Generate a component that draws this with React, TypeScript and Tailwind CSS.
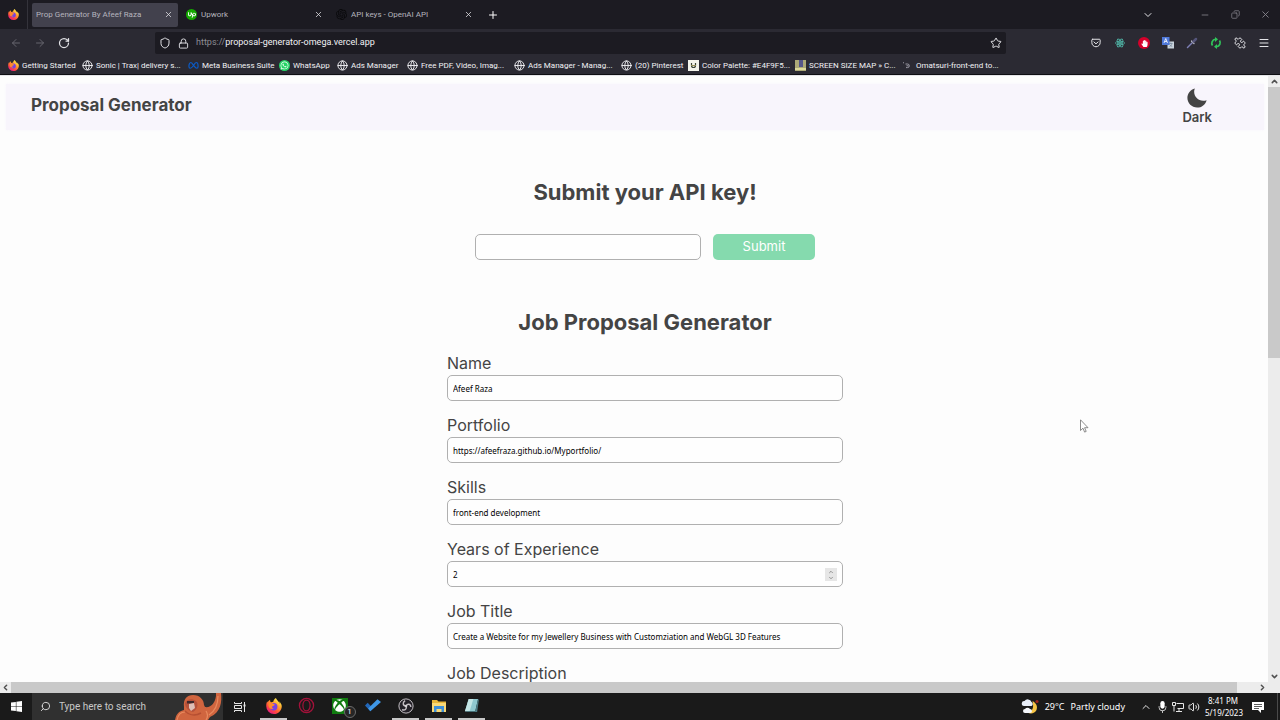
import { useState } from "react";
import type { ReactNode } from "react";
import {
  ArrowLeft,
  ArrowRight,
  ChevronDown,
  ChevronLeft,
  ChevronRight,
  ChevronUp,
  Copy,
  Globe,
  Lock,
  Menu,
  Minus,
  Plus,
  Puzzle,
  RotateCw,
  Search,
  Shield,
  Star,
  Volume2,
  X,
} from "lucide-react";
import { FaHandPaper, FaWhatsapp, FaXbox } from "react-icons/fa";
import { IoMdMoon } from "react-icons/io";
import { SiOpenai, SiUpwork } from "react-icons/si";

const FirefoxIcon = ({ className }: { className: string }) => (
  <svg viewBox="0 0 32 32" className={className} aria-hidden="true">
    <defs>
      <linearGradient id="ff-flame" x1="0.8" y1="0.1" x2="0.2" y2="0.95">
        <stop offset="0" stopColor="#fff14f" />
        <stop offset="0.35" stopColor="#ff9d2a" />
        <stop offset="0.7" stopColor="#ff4a3d" />
        <stop offset="1" stopColor="#e5168b" />
      </linearGradient>
    </defs>
    <path
      d="M29.6 11.2c-.7-1.700-2.100-3.500-3.200-4.100.9 1.800 1.400 3.500 1.600 4.800C26.200 7.500 23.200 5.700 20.800 1.900L19.800 0c-3.300 2-4.800 5.300-5.200 7.600-1.600.1-3 .6-4.300 1.300C8.500 8.200 8 5.500 8.200 3.700 5.900 5 4.100 7.100 3 9.200c-.4-.6-.4-2 0-3C.8 9.500.4 13 .5 16.500A15.500 15.500 0 0 0 16 32c8.700 0 15.500-7 15.500-15.600 0-1.900-.6-3.700-1.900-5.200z"
      fill="url(#ff-flame)"
    />
    <circle cx="15.500" cy="17.500" r="7.300" fill="#7542e5" />
    <path d="M5 11c3-3 7-2 9 .5 2 .4 3.500 1 3.500 2-.5 2-4 2-5 3.500-1 2 .5 4 3 4.500-5 2-10-1-10.500-6z" fill="#ff8a2b" />
  </svg>
);

const MetaIcon = ({ className }: { className: string }) => (
  <svg viewBox="0 0 24 18" className={className} fill="none" stroke="#0a5bc8" strokeWidth="2.600" aria-hidden="true">
    <path d="M12 9C9.500 4.500 8.300 2.500 6.200 2.500 3.700 2.500 2 6.500 2 10.800c0 2.700 1 4.200 2.800 4.200C7.500 15 9.500 12.500 12 9c2.300-4 3.700-6.500 6-6.500 2.400 0 4 4 4 8.300 0 2.700-1 4.200-2.700 4.200-2.600 0-4-2-7.300-6z" />
  </svg>
);

const PocketIcon = ({ className }: { className: string }) => (
  <svg viewBox="0 0 24 24" className={className} fill="none" stroke="currentColor" strokeWidth="2.400" strokeLinecap="round" strokeLinejoin="round" aria-hidden="true">
    <path d="M4 3h16a2 2 0 0 1 2 2v6a10 10 0 0 1-20 0V5a2 2 0 0 1 2-2z" />
    <path d="m7 9.500 5 4.500 5-4.500" />
  </svg>
);

const ReactIcon = ({ className }: { className: string }) => (
  <svg viewBox="0 0 24 24" className={className} fill="none" stroke="#4fb3a5" strokeWidth="2" aria-hidden="true">
    <ellipse cx="12" cy="12" rx="11" ry="4.500" />
    <ellipse cx="12" cy="12" rx="11" ry="4.500" transform="rotate(60 12 12)" />
    <ellipse cx="12" cy="12" rx="11" ry="4.500" transform="rotate(120 12 12)" />
    <circle cx="12" cy="12" r="2" fill="#4fb3a5" />
  </svg>
);

const TranslateIcon = ({ className }: { className: string }) => (
  <svg viewBox="0 0 24 24" className={className} aria-hidden="true">
    <rect x="11" y="9" width="13" height="14" fill="#c9d3dc" />
    <path d="M14 13h7M17.500 11v2M20 13c-1 4-3 5-5 6M15.500 15c1 2 3 3 5 4" stroke="#6c7f92" strokeWidth="1.300" fill="none" />
    <rect x="0" y="0" width="15" height="16" fill="#4f78d8" />
    <path d="m4 12 3.500-9L11 12M5.300 9h4.400" stroke="#fff" strokeWidth="1.600" fill="none" />
  </svg>
);

const DropperIcon = ({ className }: { className: string }) => (
  <svg viewBox="0 0 24 24" className={className} fill="none" strokeLinecap="round" aria-hidden="true">
    <path d="m3 21 10-10" stroke="#7d7fb5" strokeWidth="3" />
    <path d="m11 8 5 5" stroke="#b9b9c6" strokeWidth="2.400" />
    <path d="m15 9 5-5" stroke="#55557a" strokeWidth="5" />
  </svg>
);

const SyncIcon = ({ className }: { className: string }) => (
  <svg viewBox="0 0 24 24" className={className} fill="none" stroke="#30c45a" strokeWidth="3.500" aria-hidden="true">
    <path d="M5 17a8 8 0 0 1 6-12.500M19 7a8 8 0 0 1-6 12.500" />
    <path d="M10 0v10l6-5.500zM14 24V14l-6 5.500z" fill="#30c45a" stroke="none" />
  </svg>
);

const PaletteIcon = ({ className }: { className: string }) => (
  <svg viewBox="0 0 11 11" className={className} aria-hidden="true">
    <rect width="11" height="11" fill="#f4f4ec" />
    <path d="M3.500 3v2.500a2 2 0 0 0 4 0V3" fill="none" stroke="#3b4436" strokeWidth="1.200" />
    <path d="M3 5.500h5" stroke="#97915a" />
  </svg>
);

const ScreenMapIcon = ({ className }: { className: string }) => (
  <svg viewBox="0 0 11 11" className={className} aria-hidden="true">
    <rect width="11" height="11" fill="#aca978" />
    <rect x="4" width="4" height="7" fill="#55578a" />
    <rect y="8" width="11" height="2" fill="#dcd99a" />
  </svg>
);

const OmatsuriIcon = ({ className }: { className: string }) => (
  <svg viewBox="0 0 11 11" className={className} fill="none" stroke="#9c9aa5" aria-hidden="true">
    <path d="M3.500 4h2a1.800 1.800 0 0 1 0 3.600H4M4.500 5.800h2M1 2.500l1 .5" />
  </svg>
);

const WindowsIcon = ({ className }: { className: string }) => (
  <svg viewBox="0 0 12 12" className={className} fill="#fff" aria-hidden="true">
    <path d="M0 1.700 5.300 1v4.700H0zM5.900.9 12 0v5.700H5.900zM0 6.300h5.300V11L0 10.300zM5.900 6.300H12V12l-6.100-.9z" />
  </svg>
);

const OrangutanArt = () => (
  <svg viewBox="0 0 50 27" className="h-[27px] w-[50px] shrink-0" aria-hidden="true">
    <path d="M2 27c1-6 4-9 9-10l0-3C10 6 14 2 20 2c7 0 11 5 11 10l1 2c6 1 10-4 11-11V0h5c1 9 0 19-11 24l-2 3z" fill="#d0653f" />
    <path d="M4 27c1-5 4-8 8-8M36 22c6-4 9-10 9-19M33 27c2-3 2-6 0-9" fill="none" stroke="#e98a5e" strokeWidth="1.200" />
    <path d="M12 10c2-4 7-5 11-2 3 3 1 9-3 11-4-1-8-4-8-9z" fill="#b5513a" />
    <path d="M14 8h7v2.500h-7z" fill="#3f292b" />
    <path d="m16 11 5-1 1 5-4 3-2-3z" fill="#dfc0b8" />
    <path d="M12 18c3 3 9 6 16 2" fill="none" stroke="#b64f32" strokeWidth="1.500" />
  </svg>
);

const TaskViewIcon = () => (
  <svg viewBox="0 0 12 12" className="size-3" fill="none" stroke="#e6e6e6" aria-hidden="true">
    <path d="M.5 1v1.500h7V1M.5 11V9.500h7V11M.5 4.500h7v3h-7zM10.500 1v10" />
    <path d="M9.500 3.500h2v2h-2z" fill="#e6e6e6" stroke="none" />
  </svg>
);

const OperaIcon = () => (
  <svg viewBox="0 0 18 18" className="size-[17px]" fill="none" stroke="#a3123a" aria-hidden="true">
    <circle cx="9" cy="9" r="7.500" strokeWidth="1.400" />
    <ellipse cx="9" cy="9" rx="3.800" ry="5.800" strokeWidth="1.300" />
  </svg>
);

const XboxIcon = () => (
  <span className="relative grid size-4 place-items-center bg-[#107c10]">
    <FaXbox className="size-[13px] text-white" />
    <span className="absolute -right-2 -bottom-1 grid size-3 place-items-center rounded-full border border-[#6c6c6c] bg-[#262626] text-[8px] leading-none text-white">
      1
    </span>
  </span>
);

const TodoIcon = () => (
  <svg viewBox="0 0 18 16" className="h-[15px] w-4" aria-hidden="true">
    <path d="m0 8 3-3 6 6-3 3.500z" fill="#2367b8" />
    <path d="m6 14.500-2.500-3L14 1l4 3z" fill="#3f97e6" />
  </svg>
);

const ObsIcon = () => (
  <svg viewBox="0 0 18 18" className="size-4" fill="none" aria-hidden="true">
    <circle cx="9" cy="9" r="8" fill="#232027" stroke="#d6d2d6" />
    <path d="M9 9C5 8.500 5 5 8 3M9 9c2-3.500 5.500-2 5.500 1M9 9c1.500 3.500-1.500 5.500-4.500 4" stroke="#c4bfc4" strokeWidth="1.600" />
    <circle cx="9" cy="9" r="1.500" fill="#d6d2d6" />
  </svg>
);

const FolderIcon = () => (
  <svg viewBox="0 0 16 14" className="h-[14px] w-4" aria-hidden="true">
    <path d="M1 1h5l1.500 1.500H15V13H1z" fill="#e8b63a" />
    <path d="M1 4h14v9H1z" fill="#f8d877" />
    <path d="M3 7h10v6h-2.500v-3h-5v3H3z" fill="#3d8fd8" />
  </svg>
);

const NotepadIcon = () => (
  <svg viewBox="0 0 16 16" className="size-[15px]" aria-hidden="true">
    <path d="M5 1h10l-3 13H1z" fill="#8fc8cf" />
    <path d="m5 1 5 0-4 13H1z" fill="#c4e6e6" />
    <path d="m12 14 3-13 .8 1L14 15H3l-1-1z" fill="#4c7d86" />
  </svg>
);

const WeatherIcon = () => (
  <svg viewBox="0 0 18 16" className="h-4 w-[18px]" aria-hidden="true">
    <path d="M11.500 2c3.500 2 5.500 5 4 9-1.500 3.500-6 4.500-9 2.500 4 0 7-4 5-11.500z" fill="#f6c343" />
    <path d="M3 7a2.500 2.500 0 0 1 .5-5 4 4 0 0 1 7 1 2.200 2.200 0 0 1 0 4z" fill="#e8eef8" />
    <path d="M4 14a2 2 0 0 1 0-4 3 3 0 0 1 5 0 2 2 0 0 1 0 4z" fill="#f5f7fb" />
    <circle cx="16" cy="2.500" r="1.600" fill="#9e231c" />
  </svg>
);

const MicIcon = () => (
  <svg viewBox="0 0 10 14" className="h-3 w-[9px]" aria-hidden="true">
    <rect x="2.500" y="0" width="5" height="9" rx="2.500" fill="#fff" />
    <path d="M1 6v1.500a4 4 0 0 0 8 0V6M5 11v3" fill="none" stroke="#ddd" />
  </svg>
);

const NetworkIcon = () => (
  <svg viewBox="0 0 12 12" className="size-3" fill="none" stroke="#e6e6e6" aria-hidden="true">
    <path d="M4.500 2.500h7v5h-6M7 7.500v3M4 10.500h6" />
    <path d="M.5 1.500h3v3h-3zM2 4.500v6" />
  </svg>
);

const NotificationIcon = () => (
  <svg viewBox="0 0 12 12" className="size-3" aria-hidden="true">
    <path d="M0 1h12v8H9v3L6 9H0z" fill="#fff" />
    <path d="M2 3.500h8M2 5.500h8M2 7.500h5" stroke="#333" strokeWidth=".8" />
  </svg>
);

const tabs = [
  { title: "Prop Generator By Afeef Raza", icon: null, active: true },
  {
    title: "Upwork",
    icon: (
      <span className="grid size-[11px] shrink-0 place-items-center rounded-full bg-[#14a800]">
        <SiUpwork className="size-2 text-white" />
      </span>
    ),
    active: false,
  },
  { title: "API keys - OpenAI API", icon: <SiOpenai className="size-[11px] shrink-0 text-[#08080a]" />, active: false },
];

const globe = <Globe className="size-[11px] shrink-0" strokeWidth={2} />;

const bookmarks: { label: string; icon: ReactNode; width: string }[] = [
  { label: "Getting Started", icon: <FirefoxIcon className="size-[11px] shrink-0" />, width: "w-[74px]" },
  { label: "Sonic | Trax| delivery s...", icon: globe, width: "w-[106px]" },
  { label: "Meta Business Suite", icon: <MetaIcon className="h-[9px] w-[11px] shrink-0" />, width: "w-[91px]" },
  {
    label: "WhatsApp",
    icon: (
      <span className="grid size-[11px] shrink-0 place-items-center rounded-full bg-[#25d366]">
        <FaWhatsapp className="size-[9px] text-white" />
      </span>
    ),
    width: "w-[58px]",
  },
  { label: "Ads Manager", icon: globe, width: "w-[70px]" },
  { label: "Free PDF, Video, Imag...", icon: globe, width: "w-[107px]" },
  { label: "Ads Manager - Manag...", icon: globe, width: "w-[107px]" },
  { label: "(20) Pinterest", icon: globe, width: "w-[67px]" },
  { label: "Color Palette: #E4F9F5...", icon: <PaletteIcon className="size-[11px] shrink-0" />, width: "w-[107px]" },
  { label: "SCREEN SIZE MAP » C...", icon: <ScreenMapIcon className="size-[11px] shrink-0" />, width: "w-[107px]" },
  { label: "Omatsuri-front-end to...", icon: <OmatsuriIcon className="size-[11px] shrink-0" />, width: "w-[107px]" },
];

const taskbarApps: { name: string; icon: ReactNode; open: boolean }[] = [
  { name: "Firefox", icon: <FirefoxIcon className="size-4" />, open: true },
  { name: "Opera", icon: <OperaIcon />, open: false },
  { name: "Xbox", icon: <XboxIcon />, open: false },
  { name: "To Do", icon: <TodoIcon />, open: false },
  { name: "OBS", icon: <ObsIcon />, open: true },
  { name: "File Explorer", icon: <FolderIcon />, open: true },
  { name: "Notepad", icon: <NotepadIcon />, open: true },
];

const fields = [
  { id: "name", label: "Name", type: "text", value: "Afeef Raza" },
  { id: "portfolio", label: "Portfolio", type: "text", value: "https://afeefraza.github.io/Myportfolio/" },
  { id: "skills", label: "Skills", type: "text", value: "front-end development" },
  { id: "experience", label: "Years of Experience", type: "number", value: "2" },
  { id: "title", label: "Job Title", type: "text", value: "Create a Website for my Jewellery Business with Customziation and WebGL 3D Features" },
];

function TabStrip() {
  return (
    <div className="flex h-[29px] shrink-0 items-center bg-[#1c1b22] text-[8px] text-[#b5b4bd]">
      <div className="flex h-full w-7 items-center justify-center border-r border-[#34333b]">
        <FirefoxIcon className="size-[11px]" />
      </div>
      <div className="flex flex-1 items-center gap-1 pl-1">
        {tabs.map((tab) => (
          <div
            key={tab.title}
            className={`flex h-6 w-[146px] items-center gap-1 rounded-xs px-1 ${tab.active ? "bg-[#42414d]" : ""}`}
          >
            {tab.icon}
            <span className="flex-1 truncate">{tab.title}</span>
            <button aria-label={`Close ${tab.title}`} className="grid size-3 place-items-center text-[#e4e4e8]">
              <X className="size-[9px]" />
            </button>
          </div>
        ))}
        <button aria-label="New tab" className="ml-[3px] grid size-4 place-items-center text-white">
          <Plus className="size-3" />
        </button>
      </div>
      <button aria-label="List all tabs" className="mr-[45px] grid size-3 place-items-center text-[#e4e4e8]">
        <ChevronDown className="size-3" />
      </button>
      <div className="flex items-center gap-[18px] pr-[9px] text-[#85848c]">
        <button aria-label="Minimize" className="grid size-3 place-items-center">
          <Minus className="size-[10px]" />
        </button>
        <button aria-label="Restore" className="grid size-3 place-items-center">
          <Copy className="size-[9px] -scale-x-100" />
        </button>
        <button aria-label="Close window" className="grid size-3 place-items-center">
          <X className="size-[11px]" />
        </button>
      </div>
    </div>
  );
}

function NavigationBar() {
  return (
    <div className="flex h-7 shrink-0 items-center bg-[#2b2a33] text-[#e4e4e8]">
      <div className="flex w-[155px] items-center gap-3 pl-[10px]">
        <button aria-label="Back" className="text-[#66656e]">
          <ArrowLeft className="size-3" />
        </button>
        <button aria-label="Forward" className="text-[#66656e]">
          <ArrowRight className="size-3" />
        </button>
        <button aria-label="Reload">
          <RotateCw className="size-3" strokeWidth={2.5} />
        </button>
      </div>
      <div className="flex h-[22px] w-[851px] items-center gap-[7px] rounded-xs bg-[#1c1b22] px-1">
        <Shield className="size-3 shrink-0" />
        <Lock className="size-[11px] shrink-0" />
        <div className="flex-1 text-[9px] text-[#8d8c94]">
          https://<span className="text-[#f2f2f5]">proposal-generator-omega.vercel.app</span>
        </div>
        <button aria-label="Bookmark this page">
          <Star className="size-3" />
        </button>
      </div>
      <div className="ml-auto flex items-center gap-3 pr-[10px]">
        <button aria-label="Pocket"><PocketIcon className="size-3 p-px" /></button>
        <button aria-label="React Developer Tools"><ReactIcon className="size-3 p-px" /></button>
        <button aria-label="Ad blocker">
          <span className="grid size-3 place-items-center rounded-full bg-[#d4002a]">
            <FaHandPaper className="size-[7px] text-white" />
          </span>
        </button>
        <button aria-label="Translate"><TranslateIcon className="size-3" /></button>
        <button aria-label="Color picker"><DropperIcon className="size-3" /></button>
        <button aria-label="Refresh extension"><SyncIcon className="size-3" /></button>
        <button aria-label="Extensions"><Puzzle className="size-3 -rotate-90" /></button>
        <button aria-label="Open menu"><Menu className="size-3" /></button>
      </div>
    </div>
  );
}

function BookmarksBar() {
  return (
    <div className="flex h-[18px] shrink-0 items-center border-b border-[#0e0e12] bg-[#2b2a33] pl-2 text-[8px] text-[#f2f2f5]">
      {bookmarks.map((b) => (
        <a key={b.label} href="#" className={`flex shrink-0 items-center gap-[3px] whitespace-nowrap ${b.width}`}>
          {b.icon}
          <span>{b.label}</span>
        </a>
      ))}
    </div>
  );
}

const fieldBox =
  "block h-[26px] w-full rounded-[5px] border border-[#b0b0b0] bg-[#fefefe] px-[5px] font-['Noto_Sans',sans-serif] text-[8px] text-black";

function ProposalPage() {
  const [apiKey, setApiKey] = useState("");
  return (
    <div className="relative min-w-0 flex-1 overflow-hidden bg-[#fdfdfd] pt-2 font-[Inter,sans-serif] text-[#444444]">
      <header className="mr-1 ml-[6px] flex h-[46px] items-center justify-between bg-[#f8f5fc] pr-[52px] pb-1 pl-[25px] shadow-[0_0_3px_#f8f5fc]">
        <span className="text-[17px] leading-6 font-bold">Proposal Generator</span>
        <button className="flex flex-col items-center">
          <IoMdMoon className="size-6" />
          <span className="text-[13px] leading-[14px] font-semibold">Dark</span>
        </button>
      </header>
      <main className="flex flex-col items-center pl-[22px]">
        <h1 className="mt-[46px] text-[22px] leading-8 font-bold">Submit your API key!</h1>
        <form className="mt-[26px] flex items-start gap-3" onSubmit={(e) => e.preventDefault()}>
          <div className="w-[226px]">
            <input aria-label="API key" className={fieldBox} value={apiKey} onChange={(e) => setApiKey(e.target.value)} />
          </div>
          <button className="h-[26px] w-[102px] rounded-[5px] bg-[#85daae] text-[13px] text-white">Submit</button>
        </form>
        <h2 className="mt-[46px] text-[22px] leading-8 font-bold">Job Proposal Generator</h2>
        <form className="mt-[13px] flex w-[396px] flex-col gap-3">
          {fields.map((f) => (
            <div key={f.id} className="flex flex-col">
              <label htmlFor={f.id} className="text-[16px] leading-6">
                {f.label}
              </label>
              <div className="relative">
                <input
                  id={f.id}
                  type={f.type}
                  defaultValue={f.value}
                  className={`[appearance:textfield] [&::-webkit-inner-spin-button]:appearance-none ${fieldBox}`}
                />
                {f.type === "number" && (
                  <span className="absolute top-[7px] right-[6px] flex h-[13px] w-3 flex-col items-center justify-center bg-[#e6e6e6] text-[#777]">
                    <ChevronUp className="size-[6px]" strokeWidth={3} />
                    <ChevronDown className="size-[6px]" strokeWidth={3} />
                  </span>
                )}
              </div>
            </div>
          ))}
          <div className="flex flex-col">
            <label htmlFor="description" className="text-[16px] leading-6">
              Job Description
            </label>
            <textarea id="description" className={fieldBox} />
          </div>
        </form>
      </main>
      <svg viewBox="0 0 9 14" className="absolute top-[343px] left-[1080px] h-[14px] w-[9px]" aria-hidden="true">
        <path d="M.5.800v10.700L3 9.200l1.600 3.900 1.600-.7L4.600 8.700H8z" fill="#fff" stroke="#707070" strokeWidth=".8" />
      </svg>
    </div>
  );
}

function VerticalScrollbar() {
  return (
    <div className="flex w-3 shrink-0 flex-col items-center bg-[#ececec] text-[#505050]">
      <ChevronUp className="my-px size-[9px] shrink-0" strokeWidth={4} />
      <div className="h-[271px] w-full bg-[#c9c9c9]" />
      <ChevronDown className="mt-auto mb-px size-[9px] shrink-0" strokeWidth={4} />
    </div>
  );
}

function HorizontalScrollbar() {
  return (
    <div className="flex h-[11px] shrink-0 items-center bg-[#ececec] pr-3 text-[#505050]">
      <ChevronLeft className="mx-px size-[9px] shrink-0" strokeWidth={4} />
      <div className="mr-5 h-full flex-1 bg-[#c9c9c9]" />
      <ChevronRight className="mx-px size-[9px] shrink-0" strokeWidth={4} />
    </div>
  );
}

function Taskbar() {
  return (
    <div className="flex h-[27px] shrink-0 items-stretch bg-[#1a1a1a] text-white">
      <button aria-label="Start" className="grid w-8 place-items-center">
        <WindowsIcon className="size-[11px]" />
      </button>
      <label className="flex w-[191px] items-center gap-2 bg-[#303030] pl-2">
        <Search className="size-[11px] shrink-0 -scale-x-100 text-[#e0e0e0]" />
        <input
          aria-label="Search"
          placeholder="Type here to search"
          className="w-full min-w-0 flex-1 bg-transparent text-[10px] placeholder:text-[#c8c8c8] focus:outline-none"
        />
        <OrangutanArt />
      </label>
      <button aria-label="Task view" className="grid w-[34px] place-items-center">
        <TaskViewIcon />
      </button>
      <div className="flex">
        {taskbarApps.map((app) => (
          <button
            key={app.name}
            aria-label={app.name}
            className={`mx-[3px] grid w-[27px] place-items-center border-b-2 ${app.open ? "border-[#c8c8c8]" : "border-transparent"}`}
          >
            {app.icon}
          </button>
        ))}
      </div>
      <div className="ml-auto flex items-center font-['Noto_Sans',sans-serif] text-[9px]">
        <WeatherIcon />
        <span className="ml-[6px]">29°C</span>
        <span className="mr-[15px] ml-[6px]">Partly cloudy</span>
        <div className="flex items-center gap-1 text-[#e6e6e6]">
          <ChevronUp className="size-3" />
          <span className="grid w-3 place-items-center"><MicIcon /></span>
          <NetworkIcon />
          <Volume2 className="size-3" />
        </div>
        <div className="ml-[5px] w-9 text-center text-[8px] leading-3 whitespace-nowrap">
          <div>8:41 PM</div>
          <div>5/19/2023</div>
        </div>
        <button aria-label="Notifications" className="ml-[11px] grid w-3 place-items-center">
          <NotificationIcon />
        </button>
        <span className="ml-[13px] h-[27px] w-[3px] border-l border-[#4a4a4a]" />
      </div>
    </div>
  );
}

export default function App() {
  return (
    <div className="flex h-screen flex-col overflow-hidden font-[Roboto,'Noto_Sans',sans-serif]">
      <TabStrip />
      <NavigationBar />
      <BookmarksBar />
      <div className="flex min-h-0 flex-1 border-t border-[#e4e4e8]">
        <ProposalPage />
        <VerticalScrollbar />
      </div>
      <HorizontalScrollbar />
      <Taskbar />
    </div>
  );
}
